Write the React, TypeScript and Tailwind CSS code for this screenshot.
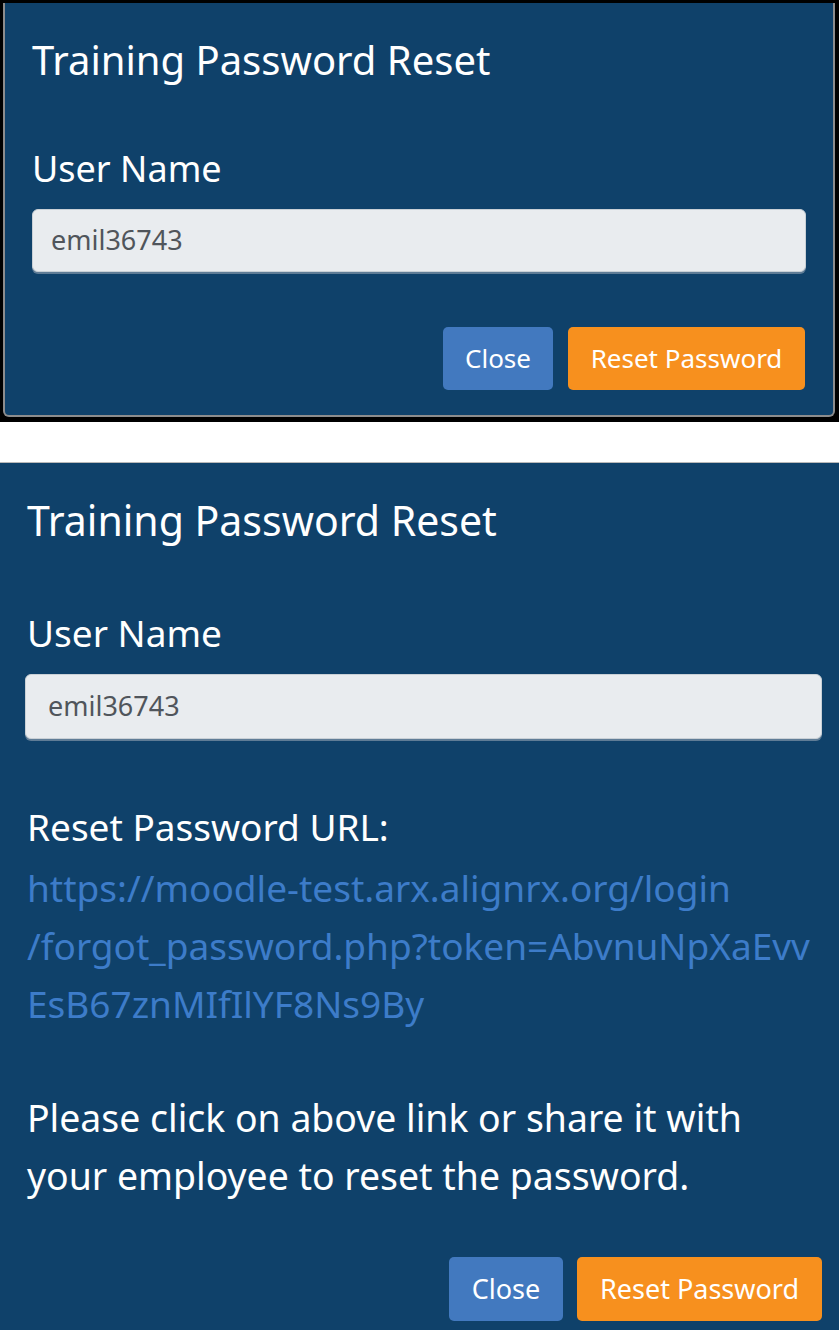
import React from "react";

const font = { fontFamily: '"Noto Sans", "Open Sans", sans-serif' };

export default function App() {
  return (
    <div className="w-[839px] h-[1330px] bg-white overflow-hidden" style={font}>
      {/* Panel 1 */}
      <div className="h-[422px] bg-black pt-[3px] pl-[3px] pr-[4px] pb-[5px]">
        <div className="h-full bg-[#0f416a] border-l-2 border-r-2 border-b-2 border-[#8c8c8c] rounded-bl-[6px] rounded-br-[6px] pl-[27px] pr-[27px]">
          <div className="pt-[33px] text-[40px] leading-[48px] text-white">Training Password Reset</div>
          <div className="mt-[63px] text-[36px] leading-[44px] text-white">User Name</div>
          <div className="mt-[18px] h-[63px] rounded-[6px] bg-[#e9ecef] border border-[#c9d0d6] shadow-[0_2px_0_#5f7c96] flex items-center pl-[18px] text-[27px] text-[#50555b]">
            emil36743
          </div>
          <div className="mt-[55px] flex justify-end gap-[15px] pr-[1px]">
            <button className="h-[63px] w-[110px] rounded-[5px] bg-[#4279bf] text-white text-[26px]">Close</button>
            <button className="h-[63px] w-[237px] rounded-[5px] bg-[#f7901e] text-white text-[26px]">Reset Password</button>
          </div>
        </div>
      </div>
      {/* gap */}
      <div className="h-[40px] bg-white" />
      {/* Panel 2 */}
      <div className="h-[868px] bg-[#0f416a] border-t border-[#b9b9b9] pl-[25px] pr-[17px]">
        <div className="pt-[32px] pl-[2px] text-[41px] leading-[50px] text-white">Training Password Reset</div>
        <div className="mt-[66px] pl-[2px] text-[37px] leading-[44px] text-white">User Name</div>
        <div className="mt-[19px] h-[65px] rounded-[6px] bg-[#e9ecef] border border-[#c9d0d6] shadow-[0_2px_0_#5f7c96] flex items-center pl-[22px] text-[27px] text-[#50555b]">
          emil36743
        </div>
        <div className="mt-[59px] pl-[2px] text-[37px] leading-[58px] text-white">Reset Password URL:</div>
        <a className="mt-[3px] block pl-[2px] text-[37px] leading-[58px] text-[#3d7cc9] whitespace-nowrap">
          https://moodle-test.arx.alignrx.org/login
          <br />
          /forgot_password.php?token=AbvnuNpXaEvv
          <br />
          EsB67znMIfIlYF8Ns9By
        </a>
        <p className="mt-[56px] pl-[2px] text-[37.4px] leading-[58px] text-white whitespace-nowrap">
          Please click on above link or share it with
          <br />
          your employee to reset the password.
        </p>
        <div className="mt-[52px] flex justify-end gap-[14px]">
          <button className="h-[64px] w-[114px] rounded-[5px] bg-[#4279bf] text-white text-[27px]">Close</button>
          <button className="h-[64px] w-[245px] rounded-[5px] bg-[#f7901e] text-white text-[27px]">Reset Password</button>
        </div>
      </div>
    </div>
  );
}
